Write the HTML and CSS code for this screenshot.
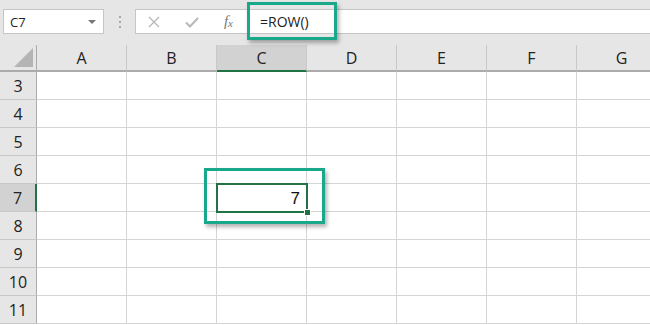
FILE: index.html
```html
<!DOCTYPE html>
<html lang="en">
<head>
  <meta charset="UTF-8" />
  <title>ROW function</title>
  <link rel="stylesheet" href="styles.css">
</head>
<body>
  <div class="app">
    <div class="toolbar">
      <div class="namebox">
        <span>C7</span>
        <span class="caret"></span>
      </div>
      <div class="grip"><i></i><i></i><i></i></div>
      <div class="formula">
        <div class="icons">
          <svg width="14" height="14" viewBox="0 0 14 14"><path d="M2 2 L12 12 M12 2 L2 12" stroke="#b8b8b8" stroke-width="1.4" fill="none"/></svg>
          <svg width="16" height="14" viewBox="0 0 16 14"><path d="M2 7.5 L6 11.5 L14 3" stroke="#b8b8b8" stroke-width="2" fill="none"/></svg>
          <span class="fx">f<sub>x</sub></span>
        </div>
        <div class="input">=ROW()</div>
      </div>
    </div>

    <div class="sheet">
      <div class="corner"><span class="tri"></span></div>
      <div class="colhead">A</div>
      <div class="colhead">B</div>
      <div class="colhead active">C</div>
      <div class="colhead">D</div>
      <div class="colhead">E</div>
      <div class="colhead">F</div>
      <div class="colhead">G</div>

      <div class="rowhead">3</div><div class="cell"></div><div class="cell"></div><div class="cell"></div><div class="cell"></div><div class="cell"></div><div class="cell"></div><div class="cell"></div>
      <div class="rowhead">4</div><div class="cell"></div><div class="cell"></div><div class="cell"></div><div class="cell"></div><div class="cell"></div><div class="cell"></div><div class="cell"></div>
      <div class="rowhead">5</div><div class="cell"></div><div class="cell"></div><div class="cell"></div><div class="cell"></div><div class="cell"></div><div class="cell"></div><div class="cell"></div>
      <div class="rowhead">6</div><div class="cell"></div><div class="cell"></div><div class="cell"></div><div class="cell"></div><div class="cell"></div><div class="cell"></div><div class="cell"></div>
      <div class="rowhead active">7</div><div class="cell"></div><div class="cell"></div><div class="cell num">7</div><div class="cell"></div><div class="cell"></div><div class="cell"></div><div class="cell"></div>
      <div class="rowhead">8</div><div class="cell"></div><div class="cell"></div><div class="cell"></div><div class="cell"></div><div class="cell"></div><div class="cell"></div><div class="cell"></div>
      <div class="rowhead">9</div><div class="cell"></div><div class="cell"></div><div class="cell"></div><div class="cell"></div><div class="cell"></div><div class="cell"></div><div class="cell"></div>
      <div class="rowhead">10</div><div class="cell"></div><div class="cell"></div><div class="cell"></div><div class="cell"></div><div class="cell"></div><div class="cell"></div><div class="cell"></div>
      <div class="rowhead">11</div><div class="cell"></div><div class="cell"></div><div class="cell"></div><div class="cell"></div><div class="cell"></div><div class="cell"></div><div class="cell"></div>
    </div>

    <!-- overlays -->
    <div class="selection"><span class="handle"></span></div>
    <div class="mark mark-formula"></div>
    <div class="mark mark-cell"></div>
  </div>
</body>
</html>
```

FILE: styles.css
```css
body {
  margin: 0;
  font-family: "Open Sans", "Noto Sans", sans-serif;
  background: #fff;
}
.app {
  position: relative;
  width: 650px;
  height: 325px;
  overflow: hidden;
}
.toolbar {
  height: 45px;
  background: #e6e6e6;
  display: flex;
  align-items: flex-start;
  padding: 9px 0 0 3px;
  box-sizing: border-box;
}
.namebox {
  width: 101px;
  height: 25px;
  box-sizing: border-box;
  background: #fff;
  border: 1px solid #c6c6c6;
  display: flex;
  align-items: center;
  justify-content: space-between;
  padding: 0 7px 0 6px;
  font-size: 13px;
  color: #222;
}
.caret {
  width: 0;
  height: 0;
  border-left: 4px solid transparent;
  border-right: 4px solid transparent;
  border-top: 4px solid #777;
}
.grip {
  width: 31px;
  height: 25px;
  display: flex;
  flex-direction: column;
  align-items: center;
  justify-content: center;
  gap: 3px;
}
.grip i {
  width: 2px;
  height: 2px;
  background: #a8a8a8;
}
.formula {
  flex: 1;
  height: 25px;
  box-sizing: border-box;
  background: #fff;
  border: 1px solid #c6c6c6;
  border-right: none;
  display: flex;
  align-items: center;
}
.icons {
  width: 111px;
  display: flex;
  align-items: center;
  justify-content: space-between;
  padding: 0 14px 0 11px;
  box-sizing: border-box;
}
.fx {
  font-family: "Liberation Serif", serif;
  font-style: italic;
  font-size: 15px;
  color: #777;
  line-height: 1;
}
.fx sub {
  font-size: 11px;
  vertical-align: -1px;
}
.input {
  padding-left: 13px;
  font-size: 14px;
  color: #222;
}
.sheet {
  display: grid;
  grid-template-columns: 37px repeat(7, 90px);
  grid-template-rows: 27px;
  grid-auto-rows: 28px;
}
.corner,
.colhead,
.rowhead {
  background: #e6e6e6;
  color: #222;
  box-sizing: border-box;
}
.corner {
  border-right: 1px solid #ababab;
  border-bottom: 2px solid #ababab;
  position: relative;
}
.tri {
  position: absolute;
  right: 3px;
  bottom: 3px;
  width: 0;
  height: 0;
  border-left: 19px solid transparent;
  border-bottom: 19px solid #b4b4b4;
}
.colhead {
  display: flex;
  align-items: center;
  justify-content: center;
  font-size: 16px;
  border-bottom: 2px solid #ababab;
  border-right: 1px solid #c8c8c8;
}
.colhead.active {
  background: #d2d2d2;
  border-bottom-color: #217346;
}
.rowhead {
  display: flex;
  align-items: center;
  justify-content: center;
  font-size: 16px;
  border-right: 1px solid #ababab;
  border-bottom: 1px solid #c8c8c8;
}
.rowhead.active {
  background: #d2d2d2;
  border-right: 2px solid #217346;
}
.cell {
  box-sizing: border-box;
  border-right: 1px solid #d4d4d4;
  border-bottom: 1px solid #d4d4d4;
}
.cell.num {
  display: flex;
  align-items: flex-end;
  justify-content: flex-end;
  padding: 0 6px 2px 0;
  font-family: "Liberation Sans", sans-serif;
  font-size: 17px;
  color: #111;
}
.selection {
  position: absolute;
  left: 216px;
  top: 183px;
  width: 92px;
  height: 30px;
  box-sizing: border-box;
  border: 2px solid #217346;
}
.handle {
  position: absolute;
  right: -5px;
  bottom: -5px;
  width: 5px;
  height: 5px;
  background: #217346;
  border: 1px solid #fff;
}
.mark {
  position: absolute;
  box-sizing: border-box;
  border: 3px solid #19a98a;
  box-shadow: 2px 3px 4px rgba(0, 0, 0, 0.3);
}
.mark-formula {
  left: 247px;
  top: 2px;
  width: 90px;
  height: 38px;
}
.mark-cell {
  left: 204px;
  top: 168px;
  width: 121px;
  height: 56px;
}
```
